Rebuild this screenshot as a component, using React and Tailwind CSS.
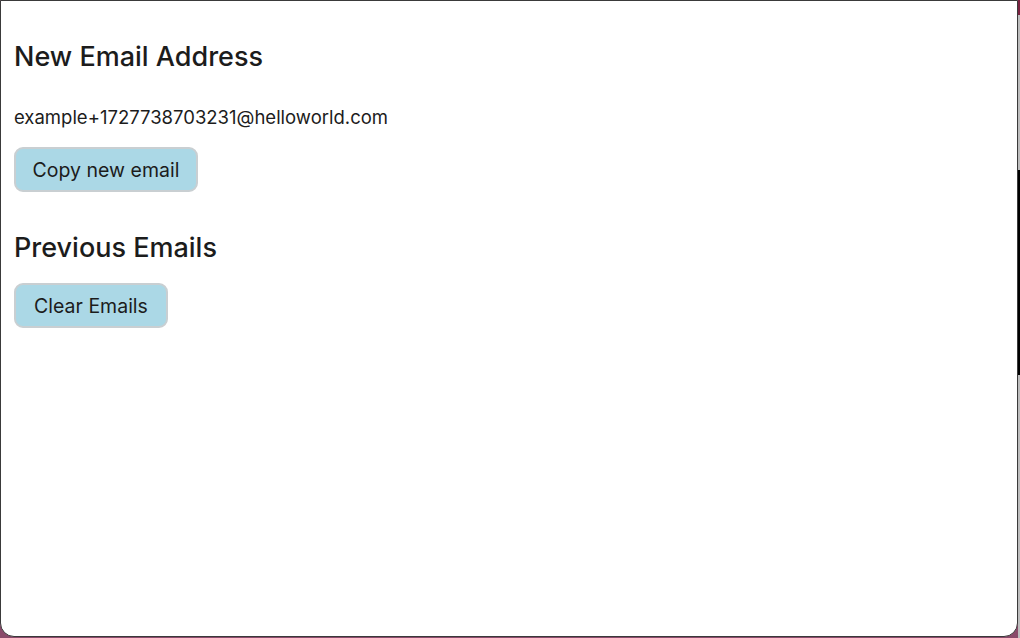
export default function App() {
  const font = { fontFamily: 'Inter, "Liberation Sans", sans-serif' };
  return (
    <div className="w-[1020px] h-[638px] flex bg-[#cfcfcf] overflow-hidden">
      <div className="w-[1018px] h-[638px] bg-[#8a4a6a] flex">
        <div
          className="w-[1018px] h-[637px] bg-white border border-[#3a3a3a] rounded-b-[14px] px-[13px] pt-[40px] text-[#1c1c1c] overflow-hidden"
          style={font}
        >
          <h2 className="text-[27px] leading-[32px] font-medium">New Email Address</h2>
          <p className="mt-[33px] text-[18.5px] leading-[22px]">example+1727738703231@helloworld.com</p>
          <button className="mt-[19px] block h-[45px] w-[184px] bg-[#abd8e6] border-2 border-[#c9cfd2] rounded-[9px] text-[19.5px] leading-[22px]">
            Copy new email
          </button>
          <h2 className="mt-[40px] text-[27px] leading-[32px] font-medium">Previous Emails</h2>
          <button className="mt-[19px] block h-[45px] w-[154px] bg-[#abd8e6] border-2 border-[#c9cfd2] rounded-[9px] text-[19.5px] leading-[22px]">
            Clear Emails
          </button>
        </div>
      </div>
      <div className="w-[2px] h-[638px] flex flex-col">
        <div className="h-[15px] bg-[#7a2240]" />
        <div className="h-[155px] bg-[#bdbdbd]" />
        <div className="h-[205px] bg-black" />
        <div className="flex-1 bg-[#bdbdbd]" />
      </div>
    </div>
  );
}
